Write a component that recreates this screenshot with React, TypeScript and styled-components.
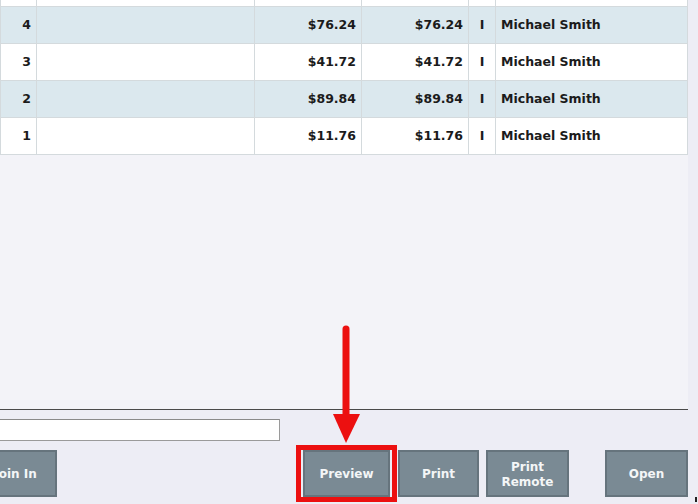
import styled, { createGlobalStyle } from 'styled-components'

const GlobalStyle = createGlobalStyle`
    html, body {
        margin: 0;
        padding: 0;
        background: #ededf5;
        overflow: hidden;
    }
`

const Page = styled.div`
    width: 698px;
    height: 504px;
    display: flex;
    flex-direction: column;
    font-family: "DejaVu Sans", Verdana, sans-serif;
    position: relative;
    overflow: hidden;
`

const ListArea = styled.div`
    width: 688px;
    height: 409px;
    background: #f3f3f8;
    border-bottom: 1px solid #4a4a4a;
    overflow: hidden;
`

const Table = styled.table`
    width: 688px;
    margin-top: -31px;
    border-collapse: collapse;
    table-layout: fixed;
    background: #fff;
    border-right: 1px solid #d4dadd;
`

const Row = styled.tr<{ $shaded: boolean }>`
    background: ${p => (p.$shaded ? '#dbe8ee' : '#ffffff')};
    height: 37px;
`

const Cell = styled.td<{ $align?: string }>`
    border: 1px solid #d4dadd;
    border-top: none;
    padding: 0 5px;
    font-size: 12.5px;
    font-weight: bold;
    color: #1b1b1b;
    text-align: ${p => p.$align || 'left'};
    white-space: nowrap;
    overflow: hidden;
`

const Bottom = styled.div`
    flex: 1;
    display: flex;
    flex-direction: column;
`

const SearchBox = styled.input`
    margin: 9px 0 0 -10px;
    width: 290px;
    height: 22px;
    box-sizing: border-box;
    border: 1px solid #9a9a9a;
    border-top-color: #8a8a8a;
    background: #fff;
`

const ButtonRow = styled.div`
    display: flex;
    align-items: flex-start;
    margin-top: 9px;
    margin-left: -26px;
`

const ActionButton = styled.button<{ $width: number; $gap: number }>`
    width: ${p => p.$width}px;
    height: 47px;
    margin-left: ${p => p.$gap}px;
    background: #7a8a94;
    border: 2px solid #66747d;
    color: #f4f6f7;
    font-family: "DejaVu Sans", Verdana, sans-serif;
    font-weight: bold;
    font-size: 12px;
    line-height: 15px;
    padding: 2px 0 0;
    white-space: pre-line;
`

const Highlight = styled.div`
    position: absolute;
    left: 296px;
    top: 445px;
    width: 101px;
    height: 57px;
    box-sizing: border-box;
    border: 5px solid #ec1010;
    pointer-events: none;
`

const Arrow = styled.svg`
    position: absolute;
    left: 330px;
    top: 322px;
`

const Corner = styled.div`
    position: absolute;
    right: 1px;
    bottom: 2px;
    width: 2px;
    height: 5px;
    background: #222;
`

const rows = [
    { n: '', a: '', b: '', who: '' },
    { n: '4', a: '$76.24', b: '$76.24', who: 'Michael Smith' },
    { n: '3', a: '$41.72', b: '$41.72', who: 'Michael Smith' },
    { n: '2', a: '$89.84', b: '$89.84', who: 'Michael Smith' },
    { n: '1', a: '$11.76', b: '$11.76', who: 'Michael Smith' },
]

const buttons = [
    { label: 'Join In', width: 83, gap: 0 },
    { label: 'Preview', width: 87, gap: 246 },
    { label: 'Print', width: 81, gap: 8 },
    { label: 'Print\nRemote', width: 83, gap: 7 },
    { label: 'Open', width: 83, gap: 36 },
]

const App = () => {
    return (
        <Page>
            <GlobalStyle />
            <ListArea>
                <Table>
                    <colgroup>
                        <col style={{ width: 36 }} />
                        <col style={{ width: 218 }} />
                        <col style={{ width: 107 }} />
                        <col style={{ width: 107 }} />
                        <col style={{ width: 27 }} />
                        <col />
                    </colgroup>
                    <tbody>
                        {rows.map((r, i) => (
                            <Row key={i} $shaded={i % 2 === 1}>
                                <Cell $align="right">{r.n}</Cell>
                                <Cell />
                                <Cell $align="right">{r.a}</Cell>
                                <Cell $align="right">{r.b}</Cell>
                                <Cell $align="center">{r.who ? 'I' : ''}</Cell>
                                <Cell>{r.who}</Cell>
                            </Row>
                        ))}
                    </tbody>
                </Table>
            </ListArea>
            <Bottom>
                <SearchBox />
                <ButtonRow>
                    {buttons.map(b => (
                        <ActionButton key={b.label} $width={b.width} $gap={b.gap}>
                            {b.label}
                        </ActionButton>
                    ))}
                </ButtonRow>
            </Bottom>
            <Highlight />
            <Arrow width="34" height="124" viewBox="0 0 34 124">
                <line x1="16" y1="7" x2="16" y2="94" stroke="#ec1010" strokeWidth="7" strokeLinecap="round" />
                <polygon points="3,92 30,92 16,121" fill="#ec1010" />
            </Arrow>
            <Corner />
        </Page>
    )
}

export default App
